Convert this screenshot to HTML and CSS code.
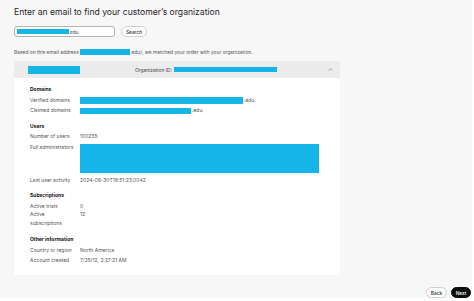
FILE: index.html
```html
<!DOCTYPE html>
<html>
<head>
<meta charset="utf-8">
<link rel="stylesheet" href="styles.css">
</head>
<body>
<div class="page">
  <h1 class="title">Enter an email to find your customer’s organization</h1>
  <div class="search-row">
    <div class="input"><span class="redact r-input"></span><span>.edu</span></div>
    <button class="btn btn-light">Search</button>
  </div>
  <p class="desc">Based on this email address <span class="redact r-desc"></span>.edu), we matched your order with your organization.</p>
  <div class="panel">
    <div class="panel-head">
      <span class="redact r-name"></span>
      <span class="org-id">Organization ID: <span class="redact r-org"></span></span>
      <svg class="chev" width="5" height="3" viewBox="0 0 5 3"><path d="M0.5 2.5 L2.5 0.7 L4.5 2.5" fill="none" stroke="#777" stroke-width="0.6"/></svg>
    </div>
    <div class="panel-body">
      <div class="section">
        <div class="heading">Domains</div>
        <div class="row"><div class="label">Verified domains</div><div class="value"><span class="redact r-ver"></span>.edu</div></div>
        <div class="row"><div class="label">Claimed domains</div><div class="value"><span class="redact r-cla"></span>.edu</div></div>
      </div>
      <div class="section">
        <div class="heading">Users</div>
        <div class="row"><div class="label">Number of users</div><div class="value">100255</div></div>
        <div class="row row-admin"><div class="label">Full administrators</div><div class="value"><span class="redact r-admin"></span></div></div>
        <div class="row"><div class="label">Last user activity</div><div class="value">2024-09-30T19:51:23.004Z</div></div>
      </div>
      <div class="section">
        <div class="heading">Subscriptions</div>
        <div class="row"><div class="label">Active trials</div><div class="value">0</div></div>
        <div class="row row-tight"><div class="label">Active<br>subscriptions</div><div class="value">12</div></div>
      </div>
      <div class="section section-other">
        <div class="heading">Other information</div>
        <div class="row"><div class="label">Country or region</div><div class="value">North America</div></div>
        <div class="row"><div class="label">Account created</div><div class="value">7/25/12, 2:27:21 AM</div></div>
      </div>
    </div>
  </div>
  <div class="footer">
    <button class="btn btn-light btn-back">Back</button>
    <button class="btn btn-dark">Next</button>
  </div>
</div>
</body>
</html>
```

FILE: styles.css
```css
html, body {
  margin: 0;
  padding: 0;
  background: #ffffff;
}
body {
  font-family: Inter, "Liberation Sans", sans-serif;
  color: #444;
}
.page {
  width: 472px;
  height: 298px;
  box-sizing: border-box;
  background: #f7f7f7;
  padding: 6px 1px 0 14px;
  display: flex;
  flex-direction: column;
}
.title {
  margin: 0;
  font-size: 8.6px;
  line-height: 12px;
  font-weight: 400;
  color: #1f1f1f;
}
.search-row {
  margin-top: 8px;
  display: flex;
  align-items: center;
  gap: 6px;
}
.input {
  width: 101px;
  height: 11px;
  box-sizing: border-box;
  border: 1px solid #b3b3b3;
  border-radius: 3px;
  background: #fff;
  display: flex;
  align-items: center;
  padding-left: 1.5px;
  font-size: 4.8px;
  color: #444;
}
.redact {
  display: inline-block;
  background: #16b5e8;
  vertical-align: middle;
}
.r-input { width: 52px; height: 5px; }
.btn {
  font-family: Inter, "Liberation Sans", sans-serif;
  font-size: 4.8px;
  font-weight: 500;
  height: 11px;
  box-sizing: border-box;
  border-radius: 6px;
  padding: 0;
  display: flex;
  align-items: center;
  justify-content: center;
  cursor: pointer;
}
.btn-light {
  width: 26px;
  background: #fff;
  border: 1px solid #cfcfcf;
  color: #333;
}
.btn-dark {
  width: 20px;
  background: #0c0c0c;
  border: 1px solid #0c0c0c;
  color: #fff;
}
.desc {
  margin: 11.5px 0 0;
  font-size: 4.9px;
  line-height: 7px;
  color: #555;
}
.r-desc { width: 50px; height: 5.5px; }
.panel {
  margin-top: 5.5px;
  width: 326px;
  background: #fff;
}
.panel-head {
  height: 17px;
  background: #ececec;
  display: flex;
  align-items: center;
  padding: 0 7px 0 14px;
  font-size: 4.9px;
  color: #444;
}
.r-name { width: 52px; height: 8px; }
.org-id {
  margin-left: 55px;
  display: flex;
  align-items: center;
  gap: 1.5px;
}
.r-org { width: 103px; height: 5.5px; }
.chev { margin-left: auto; }
.panel-body {
  padding: 7px 16px 10px;
  display: flex;
  flex-direction: column;
  gap: 6.5px;
}
.section {
  display: flex;
  flex-direction: column;
  gap: 1.5px;
}
.section-other { margin-top: 0.9px; }
.heading {
  font-size: 5px;
  line-height: 9px;
  font-weight: 700;
  color: #111;
}
.row {
  display: flex;
  font-size: 5px;
  line-height: 9px;
  color: #555;
}
.label {
  width: 50px;
  flex-shrink: 0;
}
.value {
  display: flex;
  align-items: center;
  align-self: flex-start;
  height: 9px;
  gap: 1px;
}
.r-ver { width: 163px; height: 7px; }
.r-cla { width: 111px; height: 6px; }
.row-admin { margin-bottom: 1.5px; }
.row-admin .value { height: auto; padding-top: 1px; }
.r-admin { width: 239px; height: 29px; }
.row-tight { margin-top: -2.2px; }
.footer {
  margin-top: auto;
  display: flex;
  justify-content: flex-end;
  gap: 4px;
}
.btn-back { width: 21px; }
```
